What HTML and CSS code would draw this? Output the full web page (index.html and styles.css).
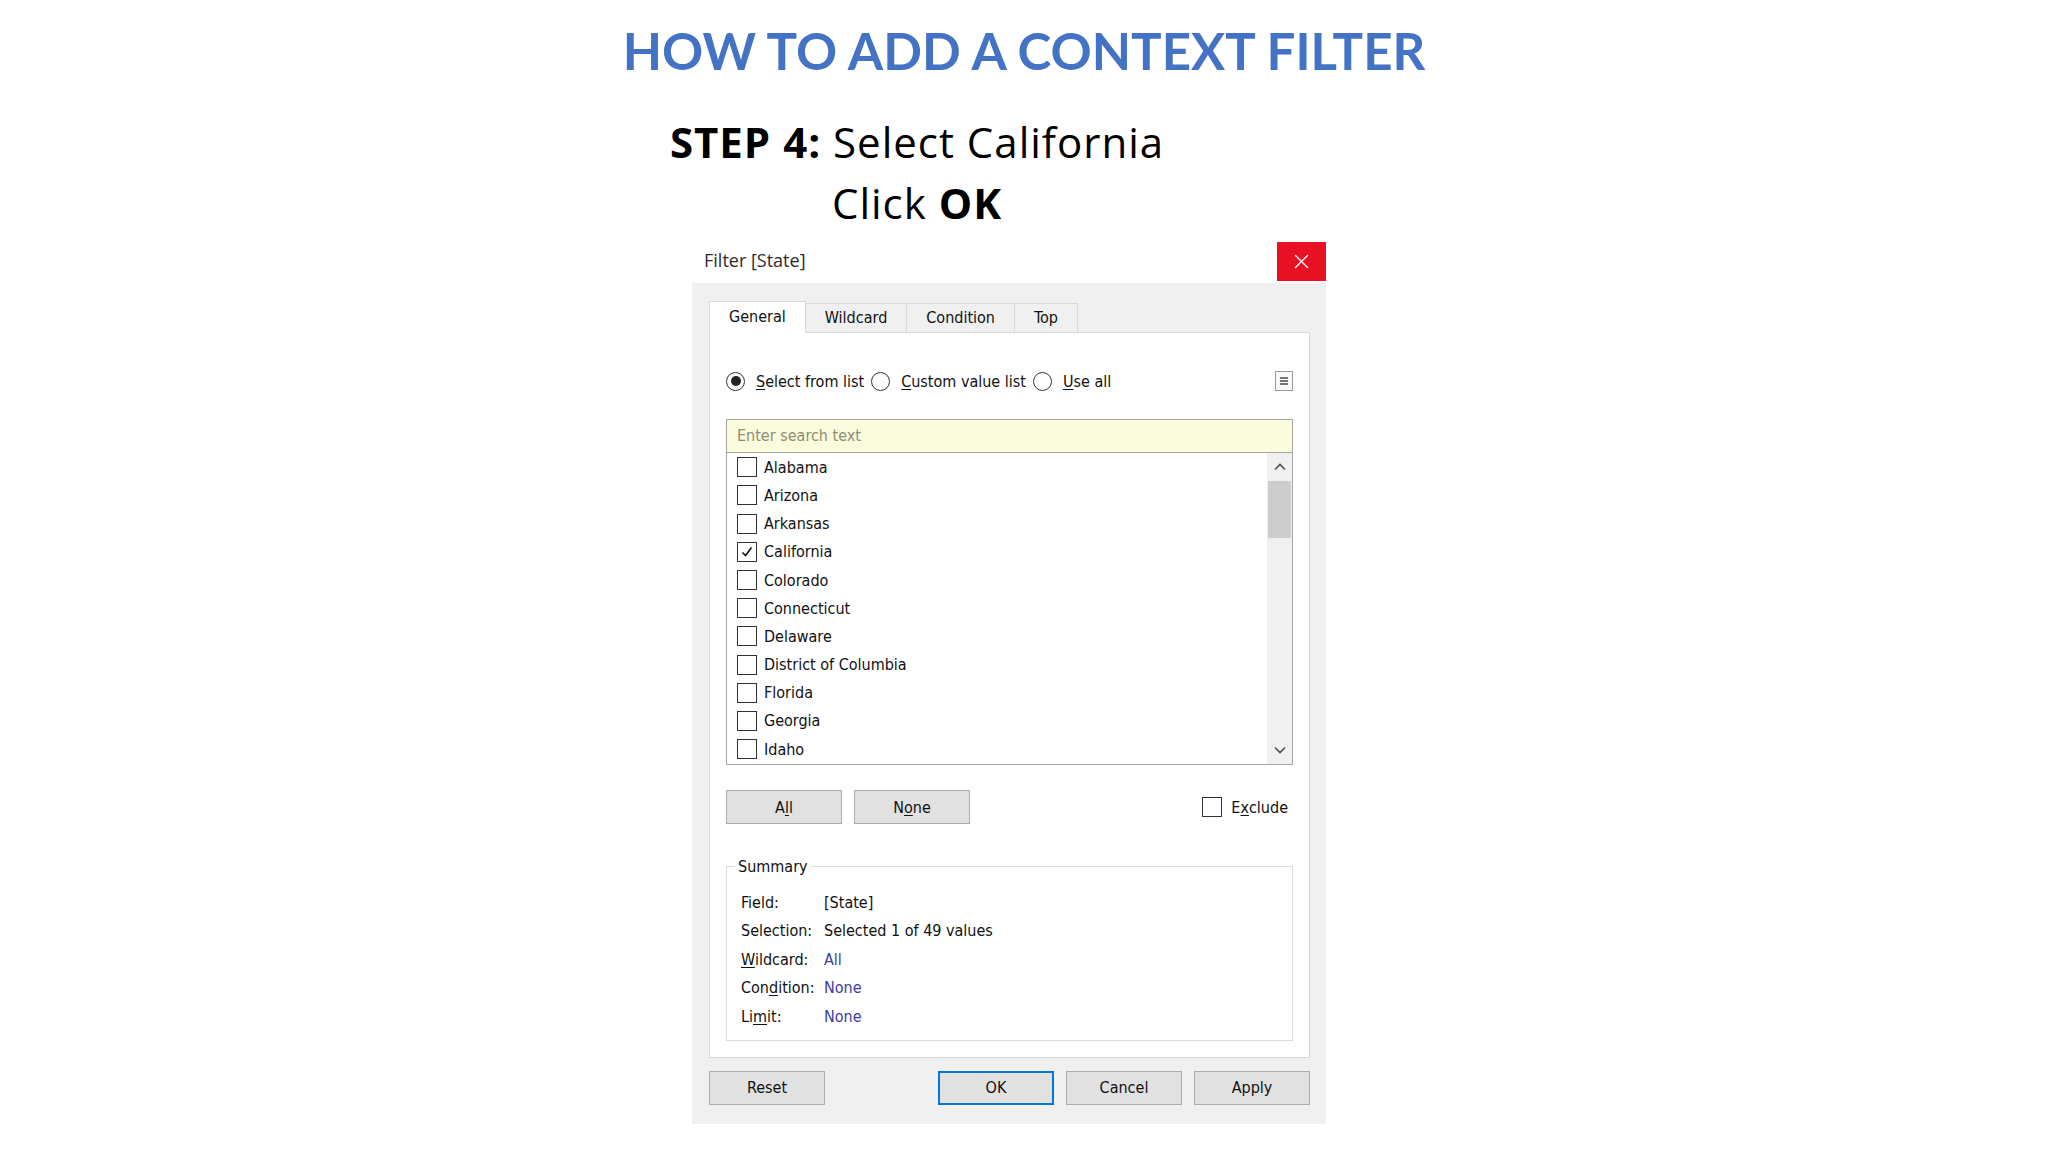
FILE: index.html
```html
<!DOCTYPE html>
<html lang="en">
<head>
    <meta charset="UTF-8">
    <meta name="viewport" content="width=device-width, initial-scale=1.0">
    <title>How to add a context filter - Step 4</title>
    <link rel="stylesheet" href="styles.css">
</head>
<body>

<div class="slide">
    <h1 class="title">HOW TO ADD A CONTEXT FILTER</h1>

    <div class="step">
        <p><b>STEP 4:</b> Select California</p>
        <p>Click <b>OK</b></p>
    </div>

    <!-- Filter dialog -->
    <div class="dialog">
        <div class="titlebar">
            <span class="caption">Filter [State]</span>
            <button class="close" type="button">
                <svg width="15" height="15" viewBox="0 0 15 15">
                    <path d="M1 1 L14 14 M14 1 L1 14" stroke="#fff" stroke-width="1.4" fill="none"/>
                </svg>
            </button>
        </div>

        <div class="dialog-body">
            <div class="tabs">
                <div class="tab active">General</div>
                <div class="tab">Wildcard</div>
                <div class="tab">Condition</div>
                <div class="tab">Top</div>
            </div>

            <div class="panel">
                <div class="mode-row">
                    <label class="radio"><span class="circle checked"></span><span><u>S</u>elect from list</span></label>
                    <label class="radio"><span class="circle"></span><span><u>C</u>ustom value list</span></label>
                    <label class="radio"><span class="circle"></span><span><u>U</u>se all</span></label>
                    <span class="menu-icon">
                        <svg width="10" height="10" viewBox="0 0 10 10">
                            <path d="M1 2 H9 M1 5 H9 M1 8 H9" stroke="#4a4a4a" stroke-width="1.6"/>
                        </svg>
                    </span>
                </div>

                <div class="search">Enter search text</div>

                <div class="list">
                    <ul class="items">
                        <li><span class="box"></span>Alabama</li>
                        <li><span class="box"></span>Arizona</li>
                        <li><span class="box"></span>Arkansas</li>
                        <li><span class="box">
                            <svg width="14" height="14" viewBox="0 0 14 14">
                                <path d="M2.5 7.5 L5.5 10.5 L11.5 2.5" stroke="#111" stroke-width="1.6" fill="none"/>
                            </svg>
                        </span>California</li>
                        <li><span class="box"></span>Colorado</li>
                        <li><span class="box"></span>Connecticut</li>
                        <li><span class="box"></span>Delaware</li>
                        <li><span class="box"></span>District of Columbia</li>
                        <li><span class="box"></span>Florida</li>
                        <li><span class="box"></span>Georgia</li>
                        <li><span class="box"></span>Idaho</li>
                    </ul>
                    <div class="scrollbar">
                        <span class="arrow">
                            <svg width="12" height="8" viewBox="0 0 12 8">
                                <path d="M1 6.5 L6 1.5 L11 6.5" stroke="#505050" stroke-width="1.6" fill="none"/>
                            </svg>
                        </span>
                        <div class="track"><div class="thumb"></div></div>
                        <span class="arrow">
                            <svg width="12" height="8" viewBox="0 0 12 8">
                                <path d="M1 1.5 L6 6.5 L11 1.5" stroke="#505050" stroke-width="1.6" fill="none"/>
                            </svg>
                        </span>
                    </div>
                </div>

                <div class="list-actions">
                    <button class="btn" type="button">A<u>l</u>l</button>
                    <button class="btn" type="button">N<u>o</u>ne</button>
                    <label class="exclude"><span class="box"></span>E<u>x</u>clude</label>
                </div>

                <fieldset class="summary">
                    <legend>Summary</legend>
                    <div class="summary-grid">
                        <span>Field:</span><span>[State]</span>
                        <span>Selection:</span><span>Selected 1 of 49 values</span>
                        <span><u>W</u>ildcard:</span><span class="val">All</span>
                        <span>Con<u>d</u>ition:</span><span class="val">None</span>
                        <span>Li<u>m</u>it:</span><span class="val">None</span>
                    </div>
                </fieldset>
            </div>

            <div class="footer">
                <button class="btn" type="button">Reset</button>
                <span class="spacer"></span>
                <button class="btn default" type="button">OK</button>
                <button class="btn" type="button">Cancel</button>
                <button class="btn" type="button">Apply</button>
            </div>
        </div>
    </div>
</div>

</body>
</html>
```

FILE: styles.css
```css
body {
    margin: 0;
    padding: 0;
    background-color: #ffffff;
    font-family: Lato, "Open Sans", sans-serif;
}
.slide {
    width: 2048px;
    height: 1152px;
    overflow: hidden;
}
.title {
    margin: 20px 0 0;
    font-size: 51px;
    line-height: 1.2;
    font-weight: 700;
    color: #4472c4;
    text-align: center;
}
.step {
    width: 700px;
    margin: 30px 0 0 567px;
    font-family: "Open Sans", sans-serif;
    font-size: 42px;
    line-height: 61px;
    letter-spacing: 1px;
    color: #000;
    text-align: center;
}
.step p {
    margin: 0;
}

/* dialog */
.dialog {
    width: 634px;
    margin: 9px 0 0 692px;
    font-family: "DejaVu Sans Condensed", "DejaVu Sans", sans-serif;
    font-size: 16px;
    color: #111;
}
.dialog u {
    text-decoration-thickness: 1px;
    text-underline-offset: 2px;
}
.titlebar {
    height: 41px;
    display: flex;
    justify-content: space-between;
    background-color: #ffffff;
}
.caption {
    padding: 6px 0 0 12px;
    font-family: "Open Sans", sans-serif;
    font-size: 18px;
    line-height: 24px;
    color: #2b2b2b;
}
.close {
    width: 49px;
    height: 39px;
    border: none;
    padding: 0;
    background-color: #e81123;
    display: flex;
    align-items: center;
    justify-content: center;
}
.dialog-body {
    background-color: #f0f0f0;
    padding: 18px 16px 19px 17px;
}
.tabs {
    display: flex;
    align-items: flex-end;
    height: 31px;
}
.tab {
    height: 29px;
    line-height: 28px;
    padding: 0 19px;
    border: 1px solid #d9d9d9;
    border-bottom: none;
    border-left: none;
    box-sizing: border-box;
    background-color: #f0f0f0;
}
.tab:first-child {
    border-left: 1px solid #d9d9d9;
}
.tab.active {
    height: 32px;
    line-height: 29px;
    margin-bottom: -1px;
    background-color: #ffffff;
    position: relative;
    z-index: 1;
}
.panel {
    background-color: #ffffff;
    border: 1px solid #d9d9d9;
    padding: 37px 16px 16px;
}
.mode-row {
    display: flex;
    align-items: center;
    height: 22px;
}
.radio {
    display: flex;
    align-items: center;
    margin-right: 7px;
}
.circle {
    width: 17px;
    height: 17px;
    border: 1px solid #333;
    border-radius: 50%;
    margin-right: 11px;
    display: flex;
    align-items: center;
    justify-content: center;
}
.circle.checked::after {
    content: "";
    width: 10px;
    height: 10px;
    border-radius: 50%;
    background-color: #222;
}
.menu-icon {
    margin-left: auto;
    width: 16px;
    height: 18px;
    border: 1px solid #9a9a9a;
    display: flex;
    align-items: center;
    justify-content: center;
    background-color: #f7f7f7;
}
.search {
    margin-top: 27px;
    height: 34px;
    box-sizing: border-box;
    border: 1px solid #a5a5a5;
    background-color: #fbfbde;
    padding-left: 10px;
    line-height: 32px;
    color: #8e8e74;
}
.list {
    display: flex;
    height: 312px;
    box-sizing: border-box;
    border: 1px solid #a5a5a5;
    border-top: none;
}
.items {
    flex: 1;
    list-style: none;
    margin: 0;
    padding: 0;
    overflow: hidden;
}
.items li {
    height: 28.2px;
    display: flex;
    align-items: center;
    padding-left: 10px;
}
.box {
    width: 20px;
    height: 20px;
    box-sizing: border-box;
    border: 1px solid #333;
    margin-right: 7px;
    display: flex;
    align-items: center;
    justify-content: center;
    background-color: #fff;
}
.scrollbar {
    width: 25px;
    display: flex;
    flex-direction: column;
    background-color: #f0f0f0;
}
.arrow {
    height: 28px;
    display: flex;
    align-items: center;
    justify-content: center;
}
.track {
    flex: 1;
    padding: 0 1px;
}
.thumb {
    height: 57px;
    background-color: #cdcdcd;
}
.list-actions {
    display: flex;
    align-items: center;
    margin-top: 25px;
}
.btn {
    width: 116px;
    height: 34px;
    border: 1px solid #adadad;
    background-color: #e1e1e1;
    font-family: "DejaVu Sans Condensed", "DejaVu Sans", sans-serif;
    font-size: 16px;
    color: #111;
    padding: 0;
    margin-right: 12px;
}
.exclude {
    margin-left: auto;
    margin-right: 5px;
    display: flex;
    align-items: center;
}
.exclude .box {
    margin-right: 9px;
}
.summary {
    margin: 33px 0 0;
    padding: 12px 14px 9px;
    border: 1px solid #dcdcdc;
    min-inline-size: 0;
}
.summary legend {
    padding: 0 3px;
    margin-left: -6px;
    line-height: 19px;
}
.summary-grid {
    display: grid;
    grid-template-columns: 83px 1fr;
    grid-auto-rows: 28.5px;
    align-items: center;
}
.summary-grid .val {
    color: #3b3ba6;
}
.footer {
    display: flex;
    margin-top: 13px;
}
.footer .btn:last-child {
    margin-right: 0;
}
.spacer {
    flex: 1;
}
.btn.default {
    border: 2px solid #0078d7;
}
```
